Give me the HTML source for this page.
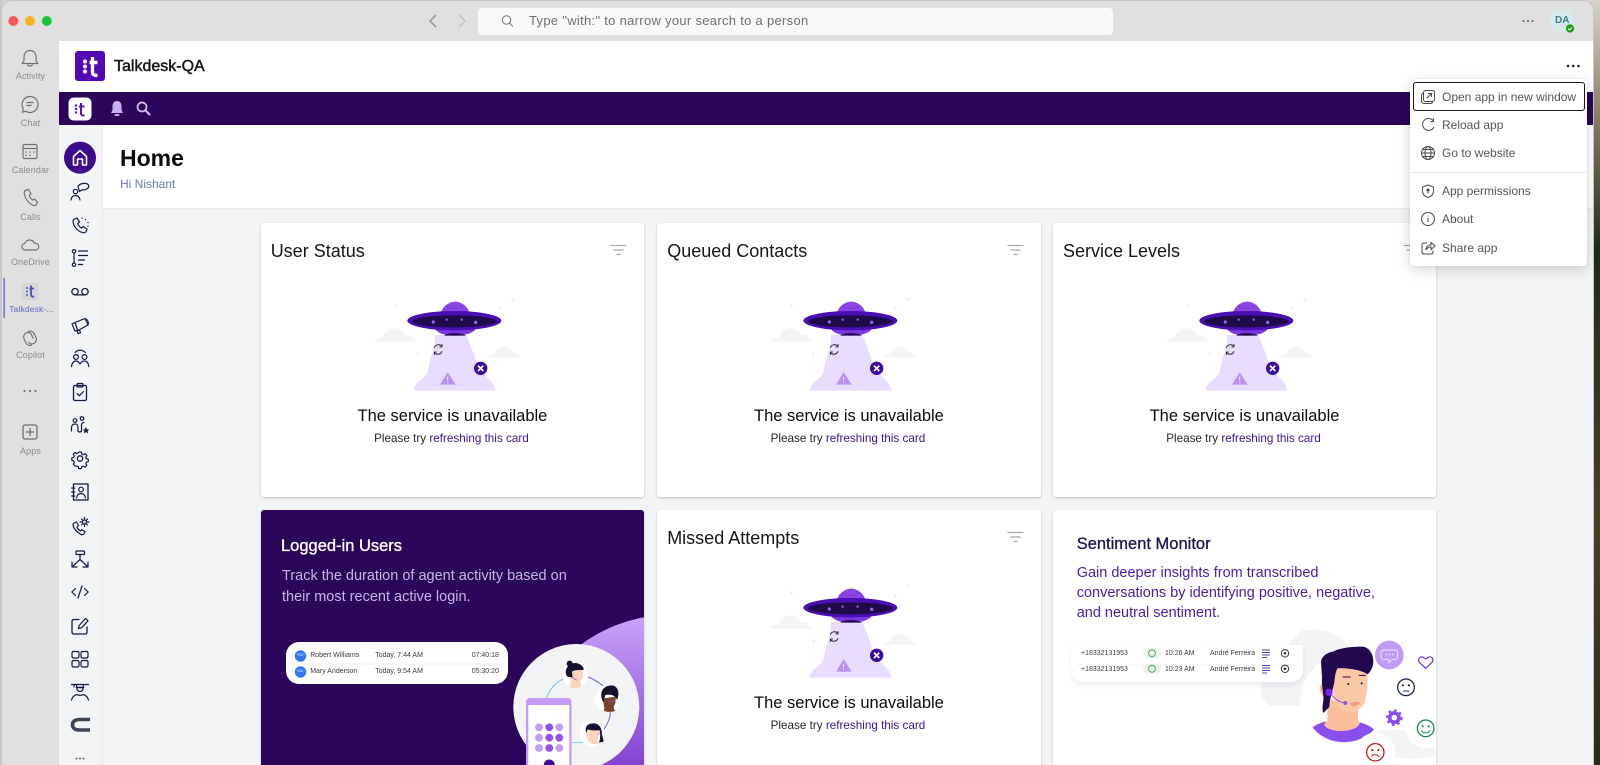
<!DOCTYPE html>
<html lang="en">
<head>
<meta charset="utf-8">
<title>Talkdesk-QA</title>
<style>
html,body{margin:0;padding:0;width:1600px;height:765px;overflow:hidden;background:#3a3524}
body{font-family:"Liberation Sans",sans-serif;position:relative}
.a{position:absolute}
.t{position:absolute;white-space:nowrap;line-height:1}
#desk{left:0;top:0;width:1600px;height:765px;background:linear-gradient(180deg,#d8d4cc 0,#8f8268 110px,#1f2a1c 250px,#4a3f25 520px,#2a2a1a 765px)}
#win{left:2px;top:1px;width:1591px;height:764px;background:#e0e0e0;border-radius:10px 10px 0 0;overflow:hidden;box-shadow:0 0 0 1px #c4c6c8}
#leftstrip{left:0;top:0;width:2px;height:765px;background:#c9c9c9}
.lab{position:absolute;left:2px;width:57px;text-align:center;font-size:9px;color:#8b8b8b;line-height:1;letter-spacing:.1px}
.card{position:absolute;background:#fff;border-radius:3px;box-shadow:0 1px 2px rgba(0,0,0,.22);overflow:hidden}
.ct{position:absolute;font-size:18px;line-height:1;color:#14161a;white-space:nowrap;left:10px}
.fl{position:absolute;width:17px;height:13px}
.u{position:absolute;width:200px;height:170px}
.s1{position:absolute;left:0;width:100%;text-align:center;font-size:16.5px;color:#0b0b0b;line-height:1;white-space:nowrap}
.s2{position:absolute;left:-1px;width:100%;text-align:center;font-size:11.7px;color:#26262a;line-height:1;white-space:nowrap}
.s2 span{color:#3d128f}
.mi{position:absolute;left:1442px;font-size:12px;color:#555;line-height:1;white-space:nowrap}
.r{position:absolute;font-size:7px;color:#3c3c40;line-height:1;white-space:nowrap}
</style>
</head>
<body>
<div class="a" id="desk"></div>
<div class="a" id="leftstrip"></div>
<div class="a" id="win"></div>

<!-- title bar -->
<svg class="a" style="left:0;top:0" width="1600" height="41" viewBox="0 0 1600 41">
<circle cx="13.3" cy="21" r="5" fill="#fb5656"/><circle cx="30" cy="21" r="5" fill="#fdb224"/><circle cx="46.8" cy="21" r="5" fill="#1cc23c"/>
<path d="M436 15l-6 6 6 6" fill="none" stroke="#8e8e8e" stroke-width="1.3"/>
<path d="M459 15l6 6-6 6" fill="none" stroke="#c2c2c2" stroke-width="1.3"/>
<rect x="478" y="8" width="635" height="27" rx="4" fill="#f9f9f9"/>
<circle cx="506.5" cy="20" r="4.2" fill="none" stroke="#777" stroke-width="1"/><path d="M509.5 23l3.5 3.5" stroke="#777" stroke-width="1"/>
<g fill="#555"><circle cx="1523.5" cy="21" r="1"/><circle cx="1528" cy="21" r="1"/><circle cx="1532.500" cy="21" r="1"/></g>
<circle cx="1562" cy="21" r="12" fill="#d4eaec"/>
<circle cx="1570" cy="28.500" r="4.600" fill="#13a10e" stroke="#e0e0e0" stroke-width="1"/><path d="M1568 28.500l1.500 1.500 2.500-2.500" fill="none" stroke="#fff" stroke-width="1"/>
</svg>
<div class="t" style="left:529px;top:13.500px;font-size:13px;color:#707070;letter-spacing:.3px">Type "with:" to narrow your search to a person</div>
<div class="t" style="left:1555px;top:16px;font-size:10px;font-weight:bold;color:#3f7f8c">DA</div>

<!-- teams rail -->
<svg class="a" style="left:0;top:41px" width="59" height="430" viewBox="0 41 59 430">
<g fill="none" stroke="#6f6f6f" stroke-width="1.15">
<path d="M30 50.500c-4 0-6 3-6 6.500v3.500l-1.800 3h15.600l-1.800-3V57c0-3.500-2-6.500-6-6.500zM27.500 64.500c.5 2 4.500 2 5 0"/>
<path d="M30 96.500a8 8 0 1 1-4.200 14.800l-3.300.9.900-3.300A8 8 0 0 1 30 96.500zM26.500 102.500h7M26.500 105.500h5"/>
<rect x="23" y="144.500" width="14" height="14" rx="1.500"/><path d="M23 148.500h14"/>
<path d="M26 190.500l2.500-1 2.500 4.500-1.800 1.500c.6 1.800 1.900 3.400 3.500 4.500l2-1 2.800 3.700-1.500 2.300c-1 .6-2.300.7-3.300.2-5-2.700-8-7.500-8.500-12.500 0-1 .6-2 1.800-2.700z"/>
<path d="M26 250c-2.600 0-4.200-1.500-4.200-3.200 0-1.700 1.300-3 3-3.200.6-2.200 2.600-3.600 4.800-3.600 2.300 0 4 1.400 4.700 3.200 2.600-.2 4.500 1.500 4.500 3.400 0 2-1.600 3.400-4 3.400z"/>
<path d="M28 331.500c2.500-1 5 0 6 2l2 4c1 2.500 0 5-2 6-2.500 1-4.500 0-5.500-1.500"/><path d="M32 345c-2.500 1-5 0-6-2l-2-4c-1-2.500 0-5 2-6 2.500-1 4.500 0 5.500 1.500l1.500 4"/>
<rect x="23" y="425" width="14" height="14" rx="2" stroke-width="1.300"/><path d="M30 428v8M26 432h8" stroke-width="1.300"/>
</g>
<g fill="#6f6f6f"><circle cx="26" cy="152" r=".8"/><circle cx="30" cy="152" r=".8"/><circle cx="34" cy="152" r=".8"/><circle cx="26" cy="155.300" r=".8"/><circle cx="30" cy="155.300" r=".8"/>
<circle cx="24.500" cy="391" r="1.100"/><circle cx="30" cy="391" r="1.100"/><circle cx="35.500" cy="391" r="1.100"/></g>
<rect x="22" y="283" width="16.500" height="17" rx="3" fill="#d6d6d6"/>
<rect x="3.500" y="278" width="1.300" height="40" fill="#5b5fc7"/>
<g fill="#5b5fc7"><circle cx="27" cy="288" r="1"/><circle cx="27" cy="291.500" r="1"/><circle cx="27" cy="295" r="1"/></g>
<path d="M31 285.500v9c0 1.500 1 2.300 3 2.300M29.500 288.500h4.500" fill="none" stroke="#4a4fc0" stroke-width="1.800"/>
</svg>
<div class="lab" style="top:72px">Activity</div>
<div class="lab" style="top:119px">Chat</div>
<div class="lab" style="top:166px">Calendar</div>
<div class="lab" style="top:213px">Calls</div>
<div class="lab" style="top:258px">OneDrive</div>
<div class="lab" style="top:305px;color:#6264c7;font-size:8.6px;left:3px">Talkdesk-...</div>
<div class="lab" style="top:351px">Copilot</div>
<div class="lab" style="top:447px">Apps</div>

<!-- main -->
<div class="a" style="left:59px;top:41px;width:1534px;height:724px;background:#f3f4f6"></div>
<div class="a" style="left:59px;top:41px;width:1534px;height:51px;background:#fff"></div>
<div class="a" style="left:59px;top:92px;width:1534px;height:33px;background:#2a0559"></div>
<div class="a" style="left:103px;top:125px;width:1490px;height:84px;background:#fff;border-bottom:1px solid #e9eaed;box-sizing:border-box"></div>
<div class="a" style="left:102px;top:125px;width:1px;height:640px;background:#e9eaed"></div>

<svg class="a" style="left:75px;top:51px" width="30" height="30" viewBox="0 0 30 30">
<rect width="30" height="30" rx="3" fill="#5209b3"/>
<g fill="#fff"><circle cx="10" cy="10.500" r="2"/><circle cx="10" cy="15.500" r="2"/><circle cx="10" cy="20.500" r="2"/></g>
<path d="M17.500 6v15c0 2.500 1.500 3.500 5 3.500M14.500 11.500h8" fill="none" stroke="#fff" stroke-width="3.400"/>
</svg>
<div class="t" style="left:114px;top:58.500px;font-size:16px;color:#141418;-webkit-text-stroke:.45px #141418">Talkdesk-QA</div>
<svg class="a" style="left:1562px;top:60px" width="22" height="12"><g fill="#222"><circle cx="6" cy="6" r="1.300"/><circle cx="11.200" cy="6" r="1.300"/><circle cx="16.400" cy="6" r="1.300"/></g></svg>

<svg class="a" style="left:68px;top:96.500px" width="60" height="26" viewBox="0 0 60 26">
<rect x="0.500" y="0.500" width="23" height="23" rx="5" fill="#fff"/>
<g fill="#5a10c0"><circle cx="8" cy="8.500" r="1.200"/><circle cx="8" cy="12" r="1.200"/><circle cx="8" cy="15.500" r="1.200"/></g>
<path d="M13 6v10.500c0 1.500 1 2 3.500 2M11 9.500h5.500" fill="none" stroke="#5a10c0" stroke-width="2"/>
<path d="M49 4c-3 0-4.500 2.300-4.500 5v4l-1.500 3h12l-1.500-3V9c0-2.700-1.500-5-4.500-5z" fill="#c9aef0"/>
<rect x="46.500" y="17" width="5" height="2" rx="1" fill="#c9aef0"/>
</svg>
<svg class="a" style="left:135px;top:100px" width="17" height="17"><circle cx="7" cy="7" r="4.500" fill="none" stroke="#d4c2f2" stroke-width="1.700"/><path d="M10.500 10.500l4.500 4.500" stroke="#d4c2f2" stroke-width="2"/></svg>

<!-- sidenav icons -->
<svg class="a" style="left:59px;top:125px" width="43" height="640" viewBox="0 125 43 640">
<circle cx="21" cy="157.700" r="16" fill="#3b0b8c"/>
<path d="M14.500 156.500l6.500-6 6.500 6v8.500h-4v-6h-5v6h-4z" fill="none" stroke="#fff" stroke-width="1.600" stroke-linejoin="round"/>
<g fill="none" stroke="#121a44" stroke-width="1.200" stroke-linecap="round" stroke-linejoin="round">
<!-- agent chat -->
<g transform="translate(12 183)"><circle cx="4.500" cy="8.500" r="2.200"/><path d="M0 17c.4-3 2-4.500 4.500-4.500S8.500 14 9 17M7 3.500C8 1 12 0 15 .5c3 .5 3.500 3.500 1.500 5S12.500 7 11 6.800L8.500 8.500z"/></g>
<!-- phone dots -->
<g transform="translate(12 216)"><path d="M3.500 3l2.500-1 2.500 4-1.800 1.500c.6 2 2 3.500 3.800 4.500l1.800-1.500 3.700 2.700-1 2.500c-.7 1-2 1.300-3.300 1C6.500 15 2.500 10.500 2 5.500 2 4.500 2.500 3.500 3.500 3z"/><path d="M11 2v.1M14.500 3.500v.1M17 6.500v.1M17 10v.1"/></g>
<!-- list -->
<g transform="translate(12 249)"><circle cx="3" cy="2.300" r="1.700"/><circle cx="3" cy="15.700" r="1.700"/><path d="M3 4v10M7.500 2h9M7.500 6.500h9M7.500 11h6M7.500 15.500h4"/></g>
<!-- voicemail -->
<g transform="translate(12 283)"><circle cx="4" cy="8.700" r="3.200" stroke-width="1.300"/><circle cx="14" cy="8.700" r="3.200" stroke-width="1.300"/><path d="M4 11.900h10" stroke-width="1.300"/></g>
<!-- megaphone -->
<g transform="translate(12 316)"><path d="M1 8l3-1.500L14 2.500l3 6.500-10 5.500-3 .5zM4 6.500l2.500 7.500M15 3c2 1 3 4 2 6"/><path d="M6 14.500l1 3 2.500-.8-1-3"/></g>
<!-- people -->
<g transform="translate(12 349)"><circle cx="5" cy="8" r="2.400"/><circle cx="13.500" cy="8" r="2.400"/><path d="M.5 17.500C1 14 2.500 12 5 12c1.500 0 3 1 4 3 1-2 2.500-3 4.500-3 2.500 0 3.800 2 4.300 5.500M4 3.500C7 .5 11 .5 14.500 3.500"/></g>
<!-- clipboard -->
<g transform="translate(12 383)"><rect x="2.500" y="2.500" width="13" height="15" rx="1.500" stroke-width="1.300"/><rect x="6" y="0.500" width="6" height="3.500" rx="1"/><path d="M6 10.500l2.300 2.300L12.500 8.500"/></g>
<!-- people star -->
<g transform="translate(12 416)"><circle cx="4" cy="4.500" r="1.800"/><circle cx="11" cy="2.500" r="1.800"/><path d="M.5 15v-3.500c0-2 1.500-3.500 3.500-3.500s3 1.500 3 3.500v3c0 2 3.500 2 3.500 0V9c0-1.500 1-2.500 2.500-2.500"/><path d="M15 11l1 2.200 2.300.3-1.700 1.500.5 2.300-2.100-1.200-2.100 1.200.5-2.300-1.700-1.500 2.300-.3z" fill="#121a44" stroke="none"/></g>
<!-- gear -->
<g transform="translate(12 449.500)"><circle cx="9" cy="9" r="2.700" stroke-width="1.300"/><path d="M7.500 1h3l.5 2.500 1.800.8L15 3l2 2.200-1.300 2.200.7 1.600 2.300.5v3l-2.300.5-.7 1.800 1.300 2-2 2.200-2.200-1.300-1.800.7-.5 2.200h-3l-.5-2.200-1.800-.7L3 17.500l-2-2.200 1.300-2-.7-1.800L-.7 11V8l2.300-.5.700-1.600L1 3.700 3 1.500l2.200 1.300 1.800-.8z" transform="translate(1.400 1.600) scale(.85)" stroke-width="1.400"/></g>
<!-- contacts -->
<g transform="translate(12 483)"><rect x="2.500" y="1" width="14.500" height="16" stroke-width="1.300"/><circle cx="10" cy="6.500" r="2.300"/><path d="M5.500 15c.5-3 2.200-4.500 4.500-4.500s4 1.500 4.500 4.500M.7 5h3M.7 9h3M.7 13h3"/></g>
<!-- phone gear -->
<g transform="translate(12 517)"><path d="M3 6l2.500-1 2 3.500L6 10c.6 1.800 1.800 3 3.300 4l1.600-1.400 3.100 2-1 2.300c-.7.800-1.800 1-2.900.6C6 15.500 2.500 11.500 2 8c0-1 .2-1.500 1-2z"/><circle cx="13.500" cy="5" r="2"/><path d="M13.500.5v1.500M13.500 8v1.500M9 5h1.500M16.500 5H18M10.500 2l1 1M15.500 7l1 1M10.500 8l1-1M15.500 3l1-1"/></g>
<!-- flow -->
<g transform="translate(12 550)"><rect x="5" y="1" width="8.500" height="3.500" rx=".5"/><path d="M9 4.500v5L1.500 16.500M9 9.500l7.500 7M1 12v5h5M12 17h5v-5"/></g>
<!-- code -->
<g transform="translate(12 583)"><path d="M4.500 5.500L.8 9l3.700 3.500M13.500 5.500L17.200 9l-3.700 3.500M11 3L7 15"/></g>
<!-- edit -->
<g transform="translate(12 617)"><path d="M8 2.500H3c-1.300 0-2 .7-2 2V15c0 1.300.7 2 2 2h11c1.300 0 2-.7 2-2v-5" stroke-width="1.300"/><path d="M7.500 11.500l.7-3L14.500 1.500l2.500 2.300-6.400 7z"/></g>
<!-- grid -->
<g transform="translate(12 650)"><rect x="1" y="1.500" width="7" height="6.500" rx="1.500"/><rect x="10" y="1.500" width="7" height="6.500" rx="1.500"/><rect x="1" y="10.500" width="7" height="6.500" rx="1.500"/><rect x="10" y="10.500" width="7" height="6.500" rx="1.500"/></g>
<!-- grad -->
<g transform="translate(12 683)"><path d="M.5 1.500h17M3 1.500v2.500M5.500 1.500c0 5 1 7 3.500 7s3.500-2 3.500-7M.5 17c1-3 3-5 5.500-5.500 1 1 5 1 6 0 2.500.5 4.500 2.500 5.500 5.500"/><path d="M5.500 4.500h7" stroke-width="1.600"/></g>
</g>
<!-- C -->
<path d="M31 719.500H20.500c-4.500 0-7 2-7 5.200s2.500 5.300 7 5.300H31" fill="none" stroke="#3c4656" stroke-width="3.600"/>
<g fill="#555"><circle cx="17.500" cy="758.500" r=".9"/><circle cx="21" cy="758.500" r=".9"/><circle cx="24.500" cy="758.500" r=".9"/></g>
</svg>

<div class="t" style="left:120px;top:147px;font-size:23px;font-weight:bold;color:#0a0a0a">Home</div>
<div class="t" style="left:120px;top:178px;font-size:12px;color:#6a7aa3">Hi Nishant</div>

<!-- UFO symbol -->
<svg width="0" height="0" style="position:absolute;left:0;top:0">
<symbol id="ufo" viewBox="0 0 600 510">
<path d="M103 185c4-10 16-12 26-12 4-18 20-30 38-28 14 1 22 10 28 20 14-2 30 8 35 20z" fill="#f3f4f6"/>
<path d="M442 233c3-8 12-10 20-10 4-14 18-24 32-22 12 1 20 10 24 16 12 0 22 8 25 16z" fill="#f3f4f6"/>
<g stroke="#e7e8eb" stroke-width="2"><path d="M167 72v12M161 78h12M478 80v12M472 86h12M517 51v12M511 57h12M232 216v12M226 222h12"/></g>
<path d="M220 332C225 300 262 300 266 262 270 225 285 215 285 165h93c16 35 24 57 32 85 10 35 52 45 55 82z" fill="#e8dcff"/>
<path d="M303 97C310 76 330 65 346 65c19 0 36 15 42 32z" fill="#8a45e3"/>
<path d="M318 76c15 12 40 12 55 0" fill="none" stroke="#6f2fce" stroke-width="1.500"/>
<path d="M281 140c6 18 30 27 64 27s60-9 66-27z" fill="#7b37dd"/>
<path d="M313 167c8-10 54-10 64 0z" fill="#240a52"/>
<ellipse cx="343" cy="122" rx="141" ry="29" fill="#4a0fb4"/>
<ellipse cx="343" cy="124" rx="127" ry="18" fill="#1f0a4a"/>
<g fill="#9b62ea"><circle cx="280" cy="126" r="5"/><circle cx="320" cy="119" r="3.500"/><circle cx="365" cy="119" r="3.500"/><circle cx="407" cy="127" r="5"/></g>
<path d="M283 203a13 13 0 0 1 23-3M306 214a13 13 0 0 1-23 3" fill="none" stroke="#22222b" stroke-width="3"/>
<path d="M306 192v9h-8M283 225v-9h8" fill="none" stroke="#22222b" stroke-width="2.500"/>
<circle cx="422" cy="265" r="20" fill="#3c0a9a"/>
<path d="M414 257l16 16M430 257l-16 16" stroke="#fff" stroke-width="5"/>
<path d="M323 278l22 35h-43z" fill="#b893f5" stroke="#b893f5" stroke-width="2" stroke-linejoin="round"/>
<path d="M323 290v11M323 305v4" stroke="#f4eeff" stroke-width="3"/>
</symbol>
<symbol id="filt" viewBox="0 0 17 13"><path d="M.5 1.500h16M3.500 6h10M6.500 10.500h4" stroke="#a3a6ae" stroke-width="1.300"/></symbol>
</svg>

<!-- Row 1 cards -->
<div class="card" style="left:260.700px;top:223px;width:383.500px;height:274px">
<div class="ct" style="top:18.500px">User Status</div>
<svg class="fl" style="left:349.500px;top:21px"><use href="#filt"/></svg>
<svg class="u" style="left:79.300px;top:57px"><use href="#ufo"/></svg>
<div class="s1" style="top:185px">The service is unavailable</div>
<div class="s2" style="top:210px">Please try <span>refreshing this card</span></div>
</div>
<div class="card" style="left:657.200px;top:223px;width:383.500px;height:274px">
<div class="ct" style="top:18.500px">Queued Contacts</div>
<svg class="fl" style="left:349.500px;top:21px"><use href="#filt"/></svg>
<svg class="u" style="left:79.300px;top:57px"><use href="#ufo"/></svg>
<div class="s1" style="top:185px">The service is unavailable</div>
<div class="s2" style="top:210px">Please try <span>refreshing this card</span></div>
</div>
<div class="card" style="left:1053px;top:223px;width:383px;height:274px">
<div class="ct" style="top:18.500px">Service Levels</div>
<svg class="fl" style="left:349.500px;top:21px"><use href="#filt"/></svg>
<svg class="u" style="left:79.300px;top:57px"><use href="#ufo"/></svg>
<div class="s1" style="top:185px">The service is unavailable</div>
<div class="s2" style="top:210px">Please try <span>refreshing this card</span></div>
</div>

<!-- Logged-in Users card -->
<div class="card" style="left:260.700px;top:510px;width:383px;height:255px;background:#2a0559;border-radius:3px 3px 0 0">
<svg class="a" style="left:0;top:0" width="383" height="255" viewBox="260.700 510 383 255">
<defs><linearGradient id="g1" x1="0" y1="0" x2="0" y2="1"><stop offset="0" stop-color="#c9a2f8"/><stop offset="1" stop-color="#8444d4"/></linearGradient></defs>
<path d="M565 658A150 150 0 0 1 643.700 617.300V765H565Z" fill="url(#g1)"/>
<path d="M551.400 765A63 63 0 1 1 600.600 765Z" fill="#f3f4f6"/>
<g fill="none" stroke-width="1"><path d="M546 698c4-10 10-16 17-19" stroke="#7cc0f5"/><path d="M588 677c5 2 10 5 15 9" stroke="#6a63d8"/><path d="M610 712c0 6-3 13-7 18" stroke="#7b5fe0"/><path d="M572 742.500h11" stroke="#8fc6f5"/></g>
<path d="M525.700 765V702a4 4 0 0 1 4-4H567.200a4 4 0 0 1 4 4V765Z" fill="#c49bf7"/>
<rect x="528" y="705" width="41" height="60" fill="#fff"/>
<g fill="#c19cf3"><circle cx="538.700" cy="727.300" r="3.900"/><circle cx="559" cy="727.300" r="3.900"/><circle cx="538.700" cy="737.700" r="3.900"/><circle cx="538.700" cy="748" r="3.900"/><circle cx="559" cy="748" r="3.900"/></g>
<g fill="#9250ee"><circle cx="549" cy="727.300" r="3.900"/><circle cx="549" cy="737.700" r="3.900"/><circle cx="559" cy="737.700" r="3.900"/><circle cx="549" cy="748" r="3.900"/></g>
<path d="M543.500 765a5.500 5.500 0 0 1 11 0z" fill="#3d0a9a"/>
<!-- agents (zoom coords) -->
<g transform="translate(500 620) scale(.33333)">
<circle cx="225" cy="165" r="38" fill="#fff"/>
<path d="M212 155C210 175 215 195 205 200 220 208 240 205 243 195 237 190 240 185 243 180 250 172 250 160 245 150Z" fill="#fbd3b8"/>
<path d="M198 165C190 140 215 125 232 130 245 133 252 145 250 150 235 150 222 150 215 155L217 172C208 172 200 172 198 165Z" fill="#17122e"/>
<circle cx="208" cy="131" r="9" fill="#17122e"/>
<path d="M218 172c4 6 8 8 13 8" fill="none" stroke="#9155ee" stroke-width="2"/>
<circle cx="323" cy="237" r="38" fill="#fff"/>
<path d="M310 235C308 255 315 265 310 272 320 278 340 276 345 272 338 265 340 258 345 250L347 230Z" fill="#7a4530"/>
<path d="M303 222C305 200 325 195 340 197 355 203 358 222 350 240 345 225 330 222 315 225 312 235 310 245 310 248 305 240 302 230 303 222Z" fill="#16102e"/>
<path d="M345 240c-5 4-12 5-18 5" fill="none" stroke="#9155ee" stroke-width="2"/>
<circle cx="275" cy="340" r="38" fill="#fff"/>
<path d="M258 330C255 350 262 365 275 372L296 372C288 360 296 350 300 330Z" fill="#fbd7c0"/>
<path d="M257 335C253 320 262 310 280 310 297 310 305 325 305 340 306 350 310 360 310 365L296 368C302 350 300 335 297 330 285 333 270 330 262 328 260 335 258 340 257 335Z" fill="#17102e"/>
<path d="M292 342h6" stroke="#9155ee" stroke-width="2"/>
</g>
</svg>
<div class="t" style="left:20.300px;top:28px;font-size:16.500px;color:#fff;-webkit-text-stroke:.35px #fff">Logged-in Users</div>
<div class="t" style="left:21.300px;top:59px;font-size:14.500px;color:#c8b6e6">Track the duration of agent activity based on</div>
<div class="t" style="left:21.300px;top:80px;font-size:14.500px;color:#c8b6e6">their most recent active login.</div>
<div class="a" style="left:25px;top:131.500px;width:222px;height:42.500px;background:#fff;border-radius:13px">
<svg class="a" style="left:0;top:0" width="222" height="43"><path d="M10 22h202" stroke="#f0f0f0" stroke-width="1"/><path d="M10 6h202" stroke="#f5f5f5"/><circle cx="14.500" cy="14" r="5.700" fill="#2f78ee"/><circle cx="14.500" cy="30" r="5.700" fill="#2f78ee"/></svg>
<div class="r" style="left:10.500px;top:11.500px;font-size:4px;color:#dbe8ff;width:8px;text-align:center">RW</div>
<div class="r" style="left:10.500px;top:27.500px;font-size:4px;color:#dbe8ff;width:8px;text-align:center">MA</div>
<div class="r" style="left:24.500px;top:10px">Robert Williams</div><div class="r" style="left:89.500px;top:10px">Today, 7:44 AM</div><div class="r" style="left:186px;top:10px">07:40:18</div>
<div class="r" style="left:24.500px;top:26px">Mary Anderson</div><div class="r" style="left:89.500px;top:26px">Today, 9:54 AM</div><div class="r" style="left:186px;top:26px">05:30:20</div>
</div>
</div>

<!-- Missed Attempts -->
<div class="card" style="left:657.200px;top:510px;width:383.500px;height:255px;border-radius:3px 3px 0 0">
<div class="ct" style="top:19px">Missed Attempts</div>
<svg class="fl" style="left:349.500px;top:21px"><use href="#filt"/></svg>
<svg class="u" style="left:79.300px;top:57px"><use href="#ufo"/></svg>
<div class="s1" style="top:185px">The service is unavailable</div>
<div class="s2" style="top:210px">Please try <span>refreshing this card</span></div>
</div>

<!-- Sentiment Monitor -->
<div class="card" style="left:1053px;top:510px;width:383px;height:255px;border-radius:3px 3px 0 0">
<svg class="a" style="left:197px;top:110px" width="186" height="145" viewBox="0 0 558 435">
<path d="M155 32c50-8 110 0 140 50 40 60 30 150-10 175H60C30 240 20 200 50 160c30-30 60-90 105-128z" fill="#f3f4f6"/>
<path d="M380 330h175v75c-40 20-130 10-175-10z" fill="#f3f4f6"/>
<circle cx="285" cy="240" r="133" fill="#fff"/>
<!-- man -->
<path d="M222 190c-10 0-14 10-12 20 2 12 8 20 18 22z" fill="#f6b995"/>
<path d="M188 322c10-8 22-13 36-17 15 3 88 3 106 3 15 3 30 10 42 20-45 52-140 52-184-6z" fill="#8a4df0"/>
<path d="M232 235v68c-5 4-8 6-10 8 5 30 100 30 108-3-3-3-5-5-6-8v-35z" fill="#fbbf9c"/>
<path d="M255 150c25-10 70-10 97 10 2 30 0 60-7 85-6 18-24 30-45 30-28 0-50-25-50-60z" fill="#fcc9a6"/>
<path d="M213 125c4-20 22-28 37-30 15-10 55-16 90-15 18 4 30 22 30 45-1 18-8 30-17 38-16-12-55-20-90-18-6 8-8 22-10 42-5 25-12 45-14 60l-1 14-18 18c-4-10-2-25 0-38 2-20-6-40-4-70z" fill="#22084f"/>
<path d="M278 171h24M326 166h21" stroke="#22084f" stroke-width="3"/>
<circle cx="295" cy="192" r="3" fill="#22084f"/><circle cx="335" cy="190" r="3" fill="#22084f"/>
<path d="M298 250c10-6 22-5 32-3-5 12-22 18-32 3z" fill="#f49c80"/>
<path d="M238 217c15 20 30 30 47 32" fill="none" stroke="#8a55e6" stroke-width="3"/>
<circle cx="237" cy="217" r="11" fill="#7a1ff0"/><circle cx="286" cy="249" r="6" fill="#9155ee"/>
<!-- bubbles -->
<circle cx="418" cy="105" r="43" fill="#c19cf7"/>
<path d="M403 90h30c6 0 10 4 10 10v10c0 6-4 9-10 9h-8l-8 9-1-9h-13c-6 0-10-3-10-9v-10c0-6 4-10 10-10z" fill="none" stroke="#fff" stroke-width="2"/>
<g fill="#fff"><circle cx="408" cy="104" r="2"/><circle cx="418" cy="104" r="2"/><circle cx="428" cy="104" r="2"/></g>
<path d="M527 145l-18-17c-8-9 1-21 11-16l7 5 7-5c11-5 20 7 11 16z" fill="none" stroke="#5a1dc4" stroke-width="3.200"/>
<circle cx="468" cy="202" r="60" fill="#fff"/>
<circle cx="468" cy="202" r="25" fill="none" stroke="#17224f" stroke-width="3.800"/>
<circle cx="459" cy="196" r="3.200" fill="#17224f"/><circle cx="477" cy="196" r="3.200" fill="#17224f"/><path d="M459 213h18" stroke="#17224f" stroke-width="3"/>
<circle cx="433" cy="293" r="14" fill="none" stroke="#8a4df0" stroke-width="11"/>
<circle cx="433" cy="293" r="22" fill="none" stroke="#8a4df0" stroke-width="6" stroke-dasharray="8 9"/>
<circle cx="527" cy="325" r="60" fill="#fff"/>
<circle cx="527" cy="325" r="25" fill="none" stroke="#0f8a45" stroke-width="3.800"/>
<circle cx="518" cy="319" r="3.200" fill="#0f8a45"/><circle cx="536" cy="319" r="3.200" fill="#0f8a45"/><path d="M514 331c5 10 20 10 26 0" fill="none" stroke="#0f8a45" stroke-width="3"/>
<path d="M328.800 435A60 60 0 1 1 423.200 435Z" fill="#fff"/>
<circle cx="376" cy="397" r="26" fill="none" stroke="#c01818" stroke-width="3.800"/>
<circle cx="367" cy="390" r="3.200" fill="#c01818"/><circle cx="385" cy="390" r="3.200" fill="#c01818"/><path d="M364 410c5-8 18-8 24 0" fill="none" stroke="#c01818" stroke-width="3"/>
</svg>
<div class="t" style="left:23.700px;top:26px;font-size:16.500px;color:#20104f;-webkit-text-stroke:.3px #20104f">Sentiment Monitor</div>
<div class="t" style="left:23.700px;top:56px;font-size:14.500px;color:#4c1da6">Gain deeper insights from transcribed</div>
<div class="t" style="left:23.700px;top:76px;font-size:14.500px;color:#4c1da6">conversations by identifying positive, negative,</div>
<div class="t" style="left:23.700px;top:96px;font-size:14.500px;color:#4c1da6">and neutral sentiment.</div>
<div class="a" style="left:18px;top:135px;width:232px;height:36.500px;background:#fff;border-radius:0 0 12px 12px;box-shadow:0 3px 6px rgba(30,20,60,.08)">
<svg class="a" style="left:0;top:0" width="232" height="37"><path d="M6 20h220" stroke="#f0f0f2"/>
<rect x="72" y="3.500" width="18" height="9.500" rx="4.700" fill="#e6f4ea"/><rect x="72" y="19" width="18" height="9.500" rx="4.700" fill="#e6f4ea"/>
<circle cx="81" cy="8.300" r="3.400" fill="none" stroke="#4aa86a"/><circle cx="81" cy="23.800" r="3.400" fill="none" stroke="#4aa86a"/>
<g stroke="#5b3ab0" stroke-width="1"><path d="M191 5h8M191 7.500h8M191 10h8M191 12.500h5M191 20.500h8M191 23h8M191 25.500h8M191 28h5"/></g>
<circle cx="214" cy="8.300" r="3.700" fill="none" stroke="#333"/><circle cx="214" cy="8.300" r="1.300" fill="#333"/><circle cx="214" cy="23.800" r="3.700" fill="none" stroke="#333"/><circle cx="214" cy="23.800" r="1.300" fill="#333"/></svg>
<div class="r" style="left:10px;top:5px">+18332131953</div><div class="r" style="left:94px;top:5px">10:26 AM</div><div class="r" style="left:139px;top:5px">André Ferreira</div>
<div class="r" style="left:10px;top:20.500px">+18332131953</div><div class="r" style="left:94px;top:20.500px">10:23 AM</div><div class="r" style="left:139px;top:20.500px">André Ferreira</div>
</div>
</div>

<!-- menu -->
<div class="a" style="left:1410px;top:79px;width:177px;height:187px;background:#fff;border-radius:4px;box-shadow:0 4px 14px rgba(0,0,0,.16),0 0 2px rgba(0,0,0,.08)"></div>
<div class="a" style="left:1413px;top:82px;width:172px;height:29px;border:1.500px solid #1a1a1a;border-radius:3px;box-sizing:border-box"></div>
<div class="a" style="left:1411px;top:172px;width:175px;height:1px;background:#e3e3e3"></div>
<svg class="a" style="left:1420px;top:88px" width="17" height="170" viewBox="0 88 17 170">
<g fill="none" stroke="#4a4a4a" stroke-width="1">
<rect x="3.500" y="90.500" width="11" height="11" rx="2"/><path d="M3.500 93.500c-1.500 0-2 1-2 2v5c0 2 1 3 3 3h6c1 0 2-.5 2-2M7 98l4.500-4.500M8 93.500h3.500V97"/>
<path d="M13.500 121a6 6 0 1 0 .5 6M13.500 118.500v3h-3"/>
<circle cx="8" cy="153" r="6.500"/><ellipse cx="8" cy="153" rx="3" ry="6.500"/><path d="M1.500 153h13M2.500 149.500h11M2.500 156.500h11"/>
<path d="M8 185l5.500 2v4c0 3.500-2.500 5.500-5.500 6.500-3-1-5.500-3-5.500-6.500v-4z"/><circle cx="8" cy="190" r="1" fill="#4a4a4a"/><path d="M8 191v2.500"/>
<circle cx="8" cy="219" r="6.500"/><path d="M8 218v4M8 215.500v1"/>
<path d="M7 243H4c-1.500 0-2 .8-2 2v7c0 1.500.5 2 2 2h7c1.500 0 2-.5 2-2v-1.500"/><path d="M6 250c0-3 2-5 5-5v-2.500l4 3.500-4 3.500V247c-2 0-4 1-5 3z"/>
</g>
</svg>
<div class="mi" style="top:90.500px">Open app in new window</div>
<div class="mi" style="top:119px">Reload app</div>
<div class="mi" style="top:147px">Go to website</div>
<div class="mi" style="top:185px">App permissions</div>
<div class="mi" style="top:213px">About</div>
<div class="mi" style="top:242px">Share app</div>
</body>
</html>
